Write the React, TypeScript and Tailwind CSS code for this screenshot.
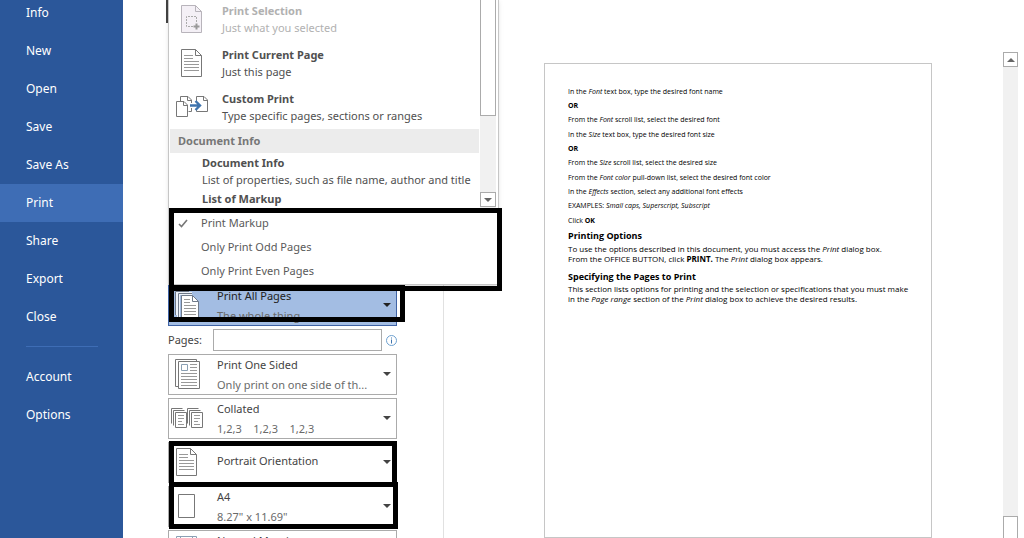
import { ReactNode } from "react";

const navItems = ["Info", "New", "Open", "Save", "Save As", "Print", "Share", "Export", "Close"];
const accountItems = ["Account", "Options"];

// ── Icons ──────────────────────────────────────────────────────────────────
function PageIcon() {
  return (
    <svg width="22" height="28" viewBox="0 0 22 28" fill="none" stroke="#777">
      <path d="M.5 .5H14.5L20.5 6.5V27.5H.5Z" fill="#fff" />
      <path d="M14.5 .5V6.5H20.5" />
      <path d="M3 6.5H12M3 9.5H12M3 12.5H18M3 15.5H18M3 18.5H18M3 21.5H18" stroke="#999" />
    </svg>
  );
}

function SelectionIcon() {
  return (
    <svg width="22" height="28" viewBox="0 0 22 28" fill="none" stroke="#b8b4bb">
      <path d="M.5 .5H14.5L20.5 6.5V27.5H.5Z" fill="#f4f0f6" />
      <path d="M14.5 .5V6.5H20.5" />
      <path d="M12 21.5H5.5V11.5H15.5V18" strokeDasharray="2 1" stroke="#aaa" />
      <path d="M15.5 18.5V24.5M12.5 21.5H18.5" stroke="#999" strokeWidth="2" />
    </svg>
  );
}

function CustomIcon() {
  return (
    <svg width="33" height="22" viewBox="0 0 33 22" fill="none" stroke="#777">
      <path d="M4.5 5V.5H12L15.5 4V7M15.5 12V15.5H12.5" />
      <path d="M11.5 .5V4.5H15" />
      <path d="M.5 5.5H8L11.5 9V20.5H.5Z" fill="#fff" />
      <path d="M7.5 5.5V9.5H11.5" />
      <path d="M20.5 5V.5H28L31.5 4V15.5H20.5V13" />
      <path d="M27.5 .5V4.5H31.5" />
      <path d="M14 9.5H23.5M19.5 5L24 9.5L19.5 14" stroke="#3f74ae" strokeWidth="2.4" />
    </svg>
  );
}

function AllPagesIcon() {
  return (
    <svg width="24" height="31" viewBox="0 0 24 31" fill="none" stroke="#6f7a8a">
      <path d="M.5 25V1.5H14M3.5 28V3.5H17" stroke="#eef3fa" strokeWidth="3" />
      <path d="M.5 25V1.5H14M3.5 28V3.5H17" />
      <path d="M6.5 5.5H17.5L23.5 11.5V30.5H6.5Z" fill="#fff" />
      <path d="M17.5 5.5V11.5H23.5" />
      <path d="M9 9.5H15M9 12.5H15M9 15.5H21M9 18.5H21M9 21.5H21M9 24.5H21" stroke="#999" />
    </svg>
  );
}

function OneSidedIcon() {
  return (
    <svg width="25" height="31" viewBox="0 0 25 31" fill="none" stroke="#777">
      <path d="M3 27.5H.5V.5H21.5V2" />
      <path d="M3.5 2.5H24.5V29.5H3.5Z" fill="#fff" />
      <path d="M6.5 5.5H12.5V11.5H6.5Z" stroke="#8ba0b4" />
      <path d="M15 5.5H22M15 8.5H22M15 11.5H22M6 14.5H22M6 17.5H22M6 20.5H22M6 23.5H22M6 26.5H22" stroke="#999" />
    </svg>
  );
}

function CollatedIcon() {
  const stack = (
    <>
      <path d="M.5 15.5V.5H11.5M2.5 17.5V2.5H13.5" />
      <path d="M4.5 4.5H15.5V19.5H4.5Z" fill="#fff" />
      <path d="M7 7.5H13M7 10.5H13M7 13.5H11M7 16.5H13" stroke="#999" />
    </>
  );
  return (
    <svg width="33" height="21" viewBox="0 0 33 21" fill="none" stroke="#777">
      {stack}
      <g transform="translate(16 0)">{stack}</g>
    </svg>
  );
}

function PaperIcon() {
  return (
    <svg width="18" height="25" viewBox="0 0 18 25" fill="#fff" stroke="#777">
      <path d="M.5 .5H16.5V23.5H.5Z" />
    </svg>
  );
}

function MarginsIcon() {
  return (
    <svg width="22" height="28" viewBox="0 0 22 28" fill="#fff" stroke="#8ba0b4">
      <path d="M.5 .5H20.5V27.5H.5ZM4.5 .5V27.5M16.5 .5V27.5" />
    </svg>
  );
}

function Triangle({ up = false }: { up?: boolean }) {
  return (
    <svg width="8" height="4" viewBox="0 0 8 4" fill="currentColor" className="shrink-0">
      <path d={up ? "M0 4L4 0L8 4Z" : "M0 0H8L4 4Z"} />
    </svg>
  );
}

// ── Building blocks ────────────────────────────────────────────────────────
function Marker({ className }: { className: string }) {
  return <div className={`absolute z-20 border-5 border-black pointer-events-none ${className}`} />;
}

function NavItem({ label, active = false }: { label: string; active?: boolean }) {
  return (
    <a
      href="#"
      className={`flex h-[38px] items-center pl-[26px] text-[12px] ${active ? "bg-[#3e6db5]" : ""}`}
    >
      {label}
    </a>
  );
}

interface SettingProps {
  icon: ReactNode;
  title: string;
  detail?: string;
  active?: boolean;
  children?: ReactNode;
}

function Setting({ icon, title, detail, active = false, children }: SettingProps) {
  return (
    <div className="relative">
      <button
        className={`flex h-[41px] w-full items-center border pr-[5px] pb-px text-left ${
          active ? "border-[#3f63a5] bg-[#a3bde3] text-[#222]" : "border-[#ababab] bg-white text-[#444]"
        }`}
      >
        <span className="flex w-9 shrink-0 justify-center">{icon}</span>
        <span className={`ml-3 min-w-0 flex-1 leading-5 ${detail ? "pt-0.5" : "pb-0.5"}`}>
          <span className="block whitespace-nowrap">{title}</span>
          {detail && <span className="block whitespace-pre text-[#6a6a6a]">{detail}</span>}
        </span>
        <Triangle />
      </button>
      {children}
    </div>
  );
}

interface MenuEntryProps {
  icon: ReactNode;
  title: string;
  detail: string;
  disabled?: boolean;
}

function MenuEntry({ icon, title, detail, disabled = false }: MenuEntryProps) {
  return (
    <button
      disabled={disabled}
      className={`flex h-11 w-full items-center text-left leading-[17px] ${disabled ? "text-[#b1b1b1]" : "text-[#505050]"}`}
    >
      <span className="flex w-11 shrink-0 justify-center">{icon}</span>
      <span className="ml-2 pb-px">
        <span className="block font-bold">{title}</span>
        <span className="block">{detail}</span>
      </span>
    </button>
  );
}

function PrintMenu() {
  return (
    <div className="absolute bottom-full left-0 z-10 w-[331px] border border-[#c6c6c6] bg-white pb-px text-[#505050] shadow-md">
      <div className="flex">
        <div className="min-w-0 flex-1 px-px pb-px">
          <MenuEntry icon={<SelectionIcon />} title="Print Selection" detail="Just what you selected" disabled />
          <MenuEntry icon={<PageIcon />} title="Print Current Page" detail="Just this page" />
          <MenuEntry icon={<CustomIcon />} title="Custom Print" detail="Type specific pages, sections or ranges" />
          <div className="h-6 bg-[#ececec] pl-2 font-bold leading-6 text-[#777]">Document Info</div>
          <button className="block w-full pl-8 pt-px text-left leading-[17px] whitespace-nowrap">
            <span className="block font-bold">Document Info</span>
            <span className="block">List of properties, such as file name, author and title</span>
          </button>
          <button className="block w-full pl-8 pt-0.5 text-left font-bold leading-[17px]">List of Markup</button>
        </div>
        <div className="mr-0.5 flex w-4 flex-col bg-[#f1f1f1]">
          <div className="h-[119px] border border-[#ababab] bg-white" />
          <button
            aria-label="Scroll down"
            className="mt-auto mb-px flex h-[15px] items-center justify-center border border-[#ababab] bg-white text-[#666]"
          >
            <Triangle />
          </button>
        </div>
      </div>
      <div className="relative pt-[3px] text-[#5a5a5a]">
        <button className="flex h-6 w-full items-center">
          <svg width="10" height="9" viewBox="0 0 10 9" fill="none" stroke="#777" strokeWidth="1.6" className="ml-[9px] mr-[13px]">
            <path d="M1 5L3.5 7.5L9 1" />
          </svg>
          Print Markup
        </button>
        <button className="block h-6 w-full pl-8 text-left">Only Print Odd Pages</button>
        <button className="block h-6 w-full pl-8 text-left">Only Print Even Pages</button>
        <Marker className="left-0 top-0 -right-1 -bottom-2" />
      </div>
    </div>
  );
}

function PreviewPage() {
  return (
    <article className="mt-[63px] ml-[100px] mr-[71px] flex-1 border border-[#c6c6c6] px-[23px] pt-[21px] font-['Open_Sans',sans-serif] text-black whitespace-nowrap">
      <div className="flex flex-col gap-px text-[7px] leading-[14px]">
        <div>
          <p>In the <i>Font</i> text box, type the desired font name</p>
          <p className="font-bold">OR</p>
          <p>From the <i>Font</i> scroll list, select the desired font</p>
        </div>
        <div>
          <p>In the <i>Size</i> text box, type the desired font size</p>
          <p className="font-bold">OR</p>
          <p>From the <i>Size</i> scroll list, select the desired size</p>
        </div>
        <div>
          <p>From the <i>Font color</i> pull-down list, select the desired font color</p>
          <p>In the <i>Effects</i> section, select any additional font effects</p>
          <p>EXAMPLES: <i>Small caps, Superscript, Subscript</i></p>
        </div>
        <p>Click <b>OK</b></p>
      </div>
      <h2 className="mt-px text-[9px] font-bold leading-[14px]">Printing Options</h2>
      <p className="mt-px text-[8px] leading-[10px]">
        To use the options described in this document, you must access the <i>Print</i> dialog box.
        <br />
        From the OFFICE BUTTON, click <b>PRINT.</b> The <i>Print</i> dialog box appears.
      </p>
      <h2 className="mt-1.5 text-[9px] font-bold leading-[14px]">Specifying the Pages to Print</h2>
      <p className="text-[8px] leading-[10px]">
        This section lists options for printing and the selection or specifications that you must make
        <br />
        in the <i>Page range</i> section of the <i>Print</i> dialog box to achieve the desired results.
      </p>
    </article>
  );
}

export default function App() {
  return (
    <div className="flex h-screen overflow-hidden bg-white font-['Noto_Sans',sans-serif] text-[11px] text-[#444]">
      <nav className="w-[123px] shrink-0 overflow-hidden bg-[#2b579a] text-white">
        <div className="-mt-1.5">
          {navItems.map((label) => (
            <NavItem key={label} label={label} active={label === "Print"} />
          ))}
          <hr className="mt-2.5 mb-[11px] ml-[26px] mr-[25px] border-[#3e6db5]" />
          {accountItems.map((label) => (
            <NavItem key={label} label={label} />
          ))}
        </div>
      </nav>

      {/* Print settings */}
      <main className="w-[321px] shrink-0 border-r border-[#e1e1e1] pl-[43px] pr-[46px]">
        <div className="h-[23px] w-0.5 bg-[#444]" />
        <div className="mt-[262px] ml-0.5 flex flex-col gap-[3px]">
          <Setting icon={<AllPagesIcon />} title="Print All Pages" detail="The whole thing" active>
            <PrintMenu />
            <Marker className="left-px top-0 -right-2 bottom-1" />
          </Setting>
          <div className="flex items-center">
            <label htmlFor="pages" className="w-[45px]">Pages:</label>
            <input id="pages" type="text" className="h-[22px] w-[169px] border border-[#ababab] px-1 outline-none" />
            <svg width="11" height="11" viewBox="0 0 11 11" fill="none" stroke="#6ea0cf" className="ml-1">
              <circle cx="5.5" cy="5.5" r="5" />
              <path d="M5.5 4.5V8.5M5.5 2.5V3.5" stroke="#3f74ae" />
            </svg>
          </div>
          <Setting icon={<OneSidedIcon />} title="Print One Sided" detail="Only print on one side of th..." />
          <Setting icon={<CollatedIcon />} title="Collated" detail="1,2,3    1,2,3    1,2,3" />
          <Setting icon={<PageIcon />} title="Portrait Orientation">
            <Marker className="left-px -top-px right-0 -bottom-1" />
          </Setting>
          <Setting icon={<PaperIcon />} title="A4" detail={'8.27" x 11.69"'}>
            <Marker className="left-px -top-1 -right-px -bottom-0.5" />
          </Setting>
          <Setting icon={<MarginsIcon />} title="Normal Margins" detail={'Left:  1"   Right:  1"'} />
        </div>
      </main>

      {/* Preview */}
      <section className="flex min-w-0 flex-1">
        <PreviewPage />
        <div className="mt-[52px] mr-1.5 flex w-[15px] shrink-0 flex-col bg-[#f1f1f1]">
          <button
            aria-label="Scroll up"
            className="flex h-[15px] items-center justify-center border border-[#ababab] bg-white text-[#666]"
          >
            <Triangle up />
          </button>
          <div className="mt-auto h-[22px] border border-b-0 border-[#ababab] bg-white" />
        </div>
      </section>
    </div>
  );
}
